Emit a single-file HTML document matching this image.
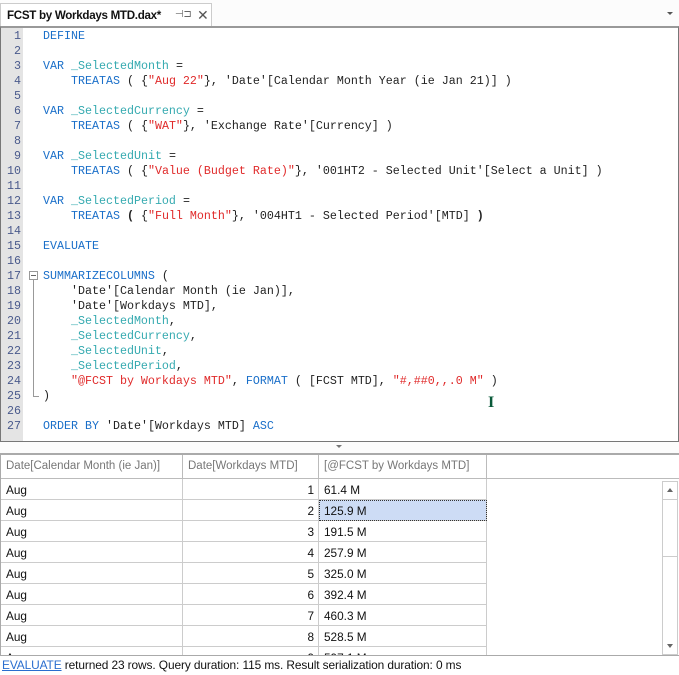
<!DOCTYPE html>
<html><head><meta charset="utf-8"><style>
*{margin:0;padding:0;box-sizing:border-box}
body{width:679px;height:675px;background:#fcfcfc;position:relative;overflow:hidden;font-family:"Liberation Sans",sans-serif}
.tab{position:absolute;left:0;top:3px;width:212px;height:24px;border:1px solid #ccc;border-bottom:none;background:#fff;font-weight:bold;font-size:11.6px;letter-spacing:-0.3px;padding:5px 0 0 6px;color:#111}
.tab .pin{position:absolute;left:174px;top:5px;font-weight:normal;color:#666;font-size:10px}
.tab .x{position:absolute;left:196px;top:3px;font-weight:normal;color:#555;font-size:14px}
.dd{position:absolute;right:6px;top:12px;width:0;height:0;border-left:3px solid transparent;border-right:3px solid transparent;border-top:3px solid #555}
.ed{position:absolute;left:0;top:26px;width:679px;height:416px;border:1px solid #777;border-top:2px solid #999;background:#fff}
.gut{position:absolute;left:0;top:0;width:22px;height:100%;background:#e4e4e4}
.code{position:absolute;left:0;top:1px;font-family:"Liberation Mono",monospace;font-size:11.67px;line-height:15px;white-space:pre}
.ln{display:inline-block;width:20px;text-align:right;color:#4a5a8c;margin-right:22px}
.k{color:#1a6fc9}.v{color:#35aab0}.s{color:#e02a2a}.t{color:#222}
.fold{position:absolute;left:28px;top:243px;width:9px;height:9px;border:1px solid #999;background:#fff}
.fold:after{content:"";position:absolute;left:1px;top:3px;width:5px;height:1px;background:#666}
.fl{position:absolute;left:32px;top:252px;width:1px;height:117px;background:#999}
.fl2{position:absolute;left:32px;top:368px;width:6px;height:1px;background:#999}
.cur{position:absolute;left:488px;top:394px;color:#0a5a3a;font-size:16px;font-family:"Liberation Serif",serif;font-weight:bold}
.split{position:absolute;left:336px;top:445px;border-left:3px solid transparent;border-right:3px solid transparent;border-top:3px solid #777}
.grid{position:absolute;left:0;top:453px;width:679px;height:202px;border-top:2px solid #aaa;border-left:1px solid #aaa;background:#fff;overflow:hidden}
.hd{position:absolute;top:0;height:24px;border-right:1px solid #bbb;border-bottom:1px solid #bbb;color:#777;font-size:11.5px;padding:5px 0 0 5px;background:#fff}
.row{position:absolute;left:0;height:21px;width:486px;font-size:11.8px;color:#111}
.c{position:absolute;top:0;height:21px;border-right:1px solid #ccc;border-bottom:1px solid #ccc;padding:4px 4px 0 5px}
.sb{position:absolute;left:661px;top:26px;width:16px;height:174px;border:1px solid #ccc;background:#fff}
.sb .th{position:absolute;left:0;top:17px;width:14px;height:58px;border:1px solid #ccc;border-left:none;border-right:none}
.status{position:absolute;left:0;top:655px;width:679px;height:20px;border-top:1px solid #aaa;background:#fff;font-size:11.9px;letter-spacing:-0.1px;padding:2px 0 0 2px;color:#111}
.status a{color:#2a6ecf;text-decoration:underline}
</style></head><body>
<div class="tab">FCST by Workdays MTD.dax*<span class="pin">⊣⊐</span><span class="x">✕</span></div>
<div class="dd"></div>
<div class="ed"><div class="gut"></div>
<div class="code"><span class="ln">1</span><span class="k">DEFINE</span>
<span class="ln">2</span>
<span class="ln">3</span><span class="k">VAR</span> <span class="v">_SelectedMonth</span> <span class="t">=</span>
<span class="ln">4</span>    <span class="k">TREATAS</span> <span class="t">( {</span><span class="s">"Aug 22"</span><span class="t">}, 'Date'[Calendar Month Year (ie Jan 21)] )</span>
<span class="ln">5</span>
<span class="ln">6</span><span class="k">VAR</span> <span class="v">_SelectedCurrency</span> <span class="t">=</span>
<span class="ln">7</span>    <span class="k">TREATAS</span> <span class="t">( {</span><span class="s">"WAT"</span><span class="t">}, 'Exchange Rate'[Currency] )</span>
<span class="ln">8</span>
<span class="ln">9</span><span class="k">VAR</span> <span class="v">_SelectedUnit</span> <span class="t">=</span>
<span class="ln">10</span>    <span class="k">TREATAS</span> <span class="t">( {</span><span class="s">"Value (Budget Rate)"</span><span class="t">}, '001HT2 - Selected Unit'[Select a Unit] )</span>
<span class="ln">11</span>
<span class="ln">12</span><span class="k">VAR</span> <span class="v">_SelectedPeriod</span> <span class="t">=</span>
<span class="ln">13</span>    <span class="k">TREATAS</span> <span class="t"><b>(</b> {</span><span class="s">"Full Month"</span><span class="t">}, '004HT1 - Selected Period'[MTD] <b>)</b></span>
<span class="ln">14</span>
<span class="ln">15</span><span class="k">EVALUATE</span>
<span class="ln">16</span>
<span class="ln">17</span><span class="k">SUMMARIZECOLUMNS</span> <span class="t">(</span>
<span class="ln">18</span>    <span class="t">'Date'[Calendar Month (ie Jan)],</span>
<span class="ln">19</span>    <span class="t">'Date'[Workdays MTD],</span>
<span class="ln">20</span>    <span class="v">_SelectedMonth</span><span class="t">,</span>
<span class="ln">21</span>    <span class="v">_SelectedCurrency</span><span class="t">,</span>
<span class="ln">22</span>    <span class="v">_SelectedUnit</span><span class="t">,</span>
<span class="ln">23</span>    <span class="v">_SelectedPeriod</span><span class="t">,</span>
<span class="ln">24</span>    <span class="s">"@FCST by Workdays MTD"</span><span class="t">, </span><span class="k">FORMAT</span> <span class="t">( [FCST MTD], </span><span class="s">"#,##0,,.0 M"</span><span class="t"> )</span>
<span class="ln">25</span><span class="t">)</span>
<span class="ln">26</span>
<span class="ln">27</span><span class="k">ORDER BY</span> <span class="t">'Date'[Workdays MTD] </span><span class="k">ASC</span></div>
<div class="fold"></div><div class="fl"></div><div class="fl2"></div>
</div>
<div class="cur">I</div>
<div class="split"></div>
<div class="grid">
<div class="hd" style="left:0;width:182px">Date[Calendar Month (ie Jan)]</div>
<div class="hd" style="left:182px;width:136px">Date[Workdays MTD]</div>
<div class="hd" style="left:318px;width:168px">[@FCST by Workdays MTD]</div>
<div class="hd" style="left:486px;width:193px;border-right:none"></div>
<div class="row" style="top:24px"><div class="c" style="left:0;width:182px">Aug</div><div class="c" style="left:182px;width:136px;text-align:right">1</div><div class="c" style="left:318px;width:168px">61.4 M</div></div>
<div class="row" style="top:45px"><div class="c" style="left:0;width:182px">Aug</div><div class="c" style="left:182px;width:136px;text-align:right">2</div><div class="c" style="left:318px;width:168px;background:#cddcf5;outline:1px dotted #333;outline-offset:-1px">125.9 M</div></div>
<div class="row" style="top:66px"><div class="c" style="left:0;width:182px">Aug</div><div class="c" style="left:182px;width:136px;text-align:right">3</div><div class="c" style="left:318px;width:168px">191.5 M</div></div>
<div class="row" style="top:87px"><div class="c" style="left:0;width:182px">Aug</div><div class="c" style="left:182px;width:136px;text-align:right">4</div><div class="c" style="left:318px;width:168px">257.9 M</div></div>
<div class="row" style="top:108px"><div class="c" style="left:0;width:182px">Aug</div><div class="c" style="left:182px;width:136px;text-align:right">5</div><div class="c" style="left:318px;width:168px">325.0 M</div></div>
<div class="row" style="top:129px"><div class="c" style="left:0;width:182px">Aug</div><div class="c" style="left:182px;width:136px;text-align:right">6</div><div class="c" style="left:318px;width:168px">392.4 M</div></div>
<div class="row" style="top:150px"><div class="c" style="left:0;width:182px">Aug</div><div class="c" style="left:182px;width:136px;text-align:right">7</div><div class="c" style="left:318px;width:168px">460.3 M</div></div>
<div class="row" style="top:171px"><div class="c" style="left:0;width:182px">Aug</div><div class="c" style="left:182px;width:136px;text-align:right">8</div><div class="c" style="left:318px;width:168px">528.5 M</div></div>
<div class="row" style="top:192px"><div class="c" style="left:0;width:182px">Aug</div><div class="c" style="left:182px;width:136px;text-align:right">9</div><div class="c" style="left:318px;width:168px">597.1 M</div></div>
<div class="sb"><div class="th"></div>
<div style="position:absolute;left:4px;top:6px;border-left:3px solid transparent;border-right:3px solid transparent;border-bottom:4px solid #666"></div>
<div style="position:absolute;left:4px;top:162px;border-left:3px solid transparent;border-right:3px solid transparent;border-top:4px solid #666"></div></div>
</div>
<div class="status"><a>EVALUATE</a> returned 23 rows. Query duration: 115 ms. Result serialization duration: 0 ms</div>
</body></html>
